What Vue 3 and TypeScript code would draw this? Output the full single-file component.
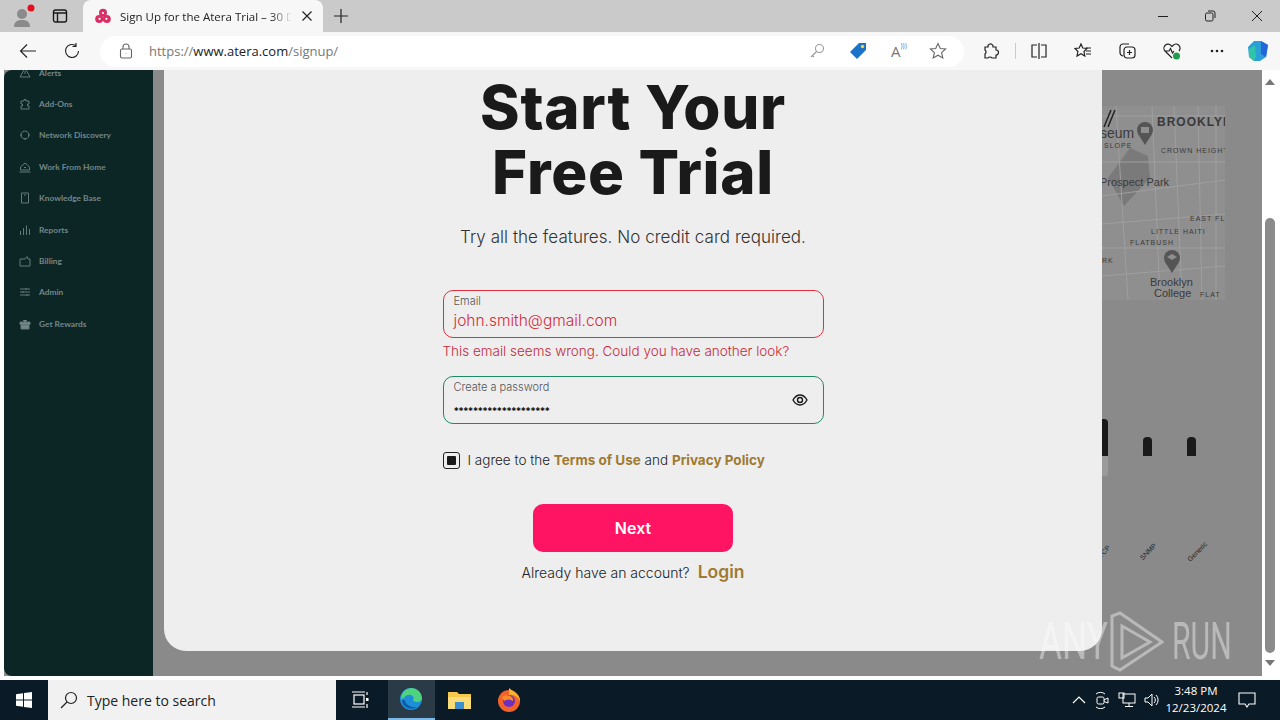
<script setup lang="ts">
interface NavItem {
  label: string
  path: string
  filled?: boolean
}

const navItems: NavItem[] = [
  { label: 'Alerts', path: 'M6 1 L11 10 H1 Z M6 4 V7' },
  { label: 'Add-Ons', path: 'M2 3 H5 V1.5 H7 V3 H10 V6 H8.5 V8 H10 V11 H2 V8 H3.5 V6 H2 Z' },
  { label: 'Network Discovery', path: 'M6 2 A4 4 0 1 1 5.9 2 M1 6 H3 M9 6 H11 M6 9 V11' },
  { label: 'Work From Home', path: 'M1.5 6 L6 2 L10.5 6 V9 H1.5 Z M0.5 11 H11.5 M5 6.5 H7' },
  { label: 'Knowledge Base', path: 'M2.5 1 H9.5 V11 H2.5 Z M5 3 H7' },
  { label: 'Reports', path: 'M1.5 11 V7 M4.5 11 V4 M7.5 11 V1.5 M10.5 11 V5' },
  { label: 'Billing', path: 'M1 4 H6 L8 1.5 L9 4 H11 V11 H1 Z M8.5 7.5 H8.6' },
  { label: 'Admin', path: 'M1 3 H11 M1 6 H11 M1 9 H11 M7 2 V4 M4 5 V7 M8 8 V10' },
  { label: 'Get Rewards', path: 'M1 4 H11 V6.5 H1 Z M2 7 H10 V11 H2 Z M4 2 L6 4 L8 2', filled: true },
]
</script>

<template>
  <div class="screen">
    <header class="tabstrip">
      <svg class="profile" width="24" height="26" viewBox="0 0 24 26">
        <circle cx="9" cy="11" r="5" fill="#8a8a8a" />
        <path d="M1 24 C1 18 5 17 9 17 C13 17 17 18 17 24 Z" fill="#8a8a8a" />
        <circle cx="18" cy="5" r="3.5" fill="#e3101f" />
      </svg>
      <svg class="tab-actions" width="16" height="16" viewBox="0 0 16 16" fill="none" stroke="#1a1a1a" stroke-width="1.4">
        <rect x="1.5" y="2" width="13" height="12" rx="2" />
        <path d="M1.5 5 H14.5 M5.5 5 V14" />
      </svg>
      <div class="tab">
        <svg width="16" height="16" viewBox="0 0 16 16">
          <g fill="#d92f66">
            <circle cx="8" cy="4.8" r="4" />
            <circle cx="4.2" cy="11" r="4" />
            <circle cx="11.8" cy="11" r="4" />
          </g>
          <g fill="#fff">
            <circle cx="8" cy="5" r="1.1" />
            <circle cx="4.6" cy="10.8" r="1.1" />
            <circle cx="11.4" cy="10.8" r="1.1" />
          </g>
        </svg>
        <span class="tab-title">Sign Up for the Atera Trial – 30 D</span>
        <svg width="12" height="12" viewBox="0 0 12 12" stroke="#222" stroke-width="1.2"><path d="M1.5 1.5 L10.5 10.5 M10.5 1.5 L1.5 10.5" /></svg>
      </div>
      <svg class="new-tab" width="16" height="16" viewBox="0 0 16 16" stroke="#222" stroke-width="1.2"><path d="M8 1 V15 M1 8 H15" /></svg>
      <div class="window-controls">
        <svg width="12" height="12" viewBox="0 0 12 12" stroke="#222"><path d="M1 6.5 H11" /></svg>
        <svg width="12" height="12" viewBox="0 0 12 12" stroke="#222" fill="none"><rect x="1.5" y="3" width="7.5" height="8" rx="1.5" /><path d="M4 1 H9 A2 2 0 0 1 11 3 V8" /></svg>
        <svg width="12" height="12" viewBox="0 0 12 12" stroke="#222"><path d="M1 1 L11 11 M11 1 L1 11" /></svg>
      </div>
    </header>

    <nav class="toolbar">
      <svg class="back" width="18" height="16" viewBox="0 0 18 16" fill="none" stroke="#222" stroke-width="1.1"><path d="M17 8 H1.5 M8 1.5 L1.5 8 L8 14.5" /></svg>
      <svg class="reload" width="18" height="18" viewBox="0 0 18 18" fill="none" stroke="#222" stroke-width="1.1"><path d="M15.5 9 A6.5 6.5 0 1 1 12.5 3.5 M13 1 V4.5 H9.5" /></svg>
      <div class="address">
        <svg width="14" height="16" viewBox="0 0 14 16" fill="none" stroke="#666" stroke-width="1.1"><rect x="1.5" y="6" width="11" height="9" rx="1.5" /><path d="M4 6 V4 A3 3 0 0 1 10 4 V6 M7 10 V10.6" /></svg>
        <span class="url"><i>https://</i>www.atera.com<i>/signup/</i></span>
        <div class="address-icons">
          <svg class="key" width="16" height="16" viewBox="0 0 16 16" fill="none" stroke="#999" stroke-width="1.1"><circle cx="10.5" cy="5.5" r="4" /><path d="M7.5 8.5 L2 14 M3.5 12.5 L5 14" /></svg>
          <svg width="18" height="18" viewBox="0 0 18 18"><path d="M10 1 H17 V8 L8 17 L1 10 Z" fill="#1a73c9" /><circle cx="13.5" cy="4.5" r="1.7" fill="#f5d33b" /></svg>
          <span class="read-aloud">A<small>)))</small></span>
          <svg width="18" height="18" viewBox="0 0 18 18" fill="none" stroke="#666" stroke-width="1.1"><path d="M9 1.5 L11.3 6.5 L16.6 7 L12.6 10.6 L13.8 16 L9 13.2 L4.2 16 L5.4 10.6 L1.4 7 L6.7 6.5 Z" /></svg>
        </div>
      </div>
      <div class="tool-icons">
        <svg width="18" height="18" viewBox="0 0 18 18" fill="none" stroke="#222" stroke-width="1.2"><path d="M3 5 H6 A2.5 2.5 0 0 1 11 4 L11 5 H14 V8 A2.5 2.5 0 0 1 14 13 V16 H10 A2.5 2.5 0 0 0 6 16 H3 V12 A2.5 2.5 0 0 0 3 8 Z" /></svg>
        <span class="tool-sep"></span>
        <svg width="18" height="18" viewBox="0 0 18 18" fill="none" stroke="#222" stroke-width="1.2"><path d="M7 3 H2 V15 H7 M11 3 H16 V15 H11 M9 1 V17" /></svg>
        <svg width="18" height="18" viewBox="0 0 18 18" fill="none" stroke="#222" stroke-width="1.2"><path d="M7 2 L8.8 6 L13 6.5 L10 9.5 L10.8 14 L7 11.8 L3 14 L3.9 9.5 L1 6.5 L5.2 6 Z M12 9 H17 M12 12 H17 M12 6 H17" /></svg>
        <svg width="18" height="18" viewBox="0 0 18 18" fill="none" stroke="#222" stroke-width="1.2"><rect x="6" y="5" width="11" height="11" rx="3" /><path d="M11.5 8 V13 M9 10.5 H14 M5 14 A4 4 0 0 1 2 10 V5 A3 3 0 0 1 5 2 H11" /></svg>
        <svg width="20" height="20" viewBox="0 0 20 20" fill="none"><path d="M10 17 L3 10 A4 4 0 0 1 9 4.5 L10 5.5 L11 4.5 A4 4 0 0 1 17 10 M3 10 H7 L8.5 7.5 L10.5 12 L12 10" stroke="#222" stroke-width="1.2" /><circle cx="14.5" cy="15" r="3.5" fill="#1f9d4d" /></svg>
        <svg width="18" height="18" viewBox="0 0 18 18" fill="#222"><circle cx="4" cy="9" r="1.3" /><circle cx="9" cy="9" r="1.3" /><circle cx="14" cy="9" r="1.3" /></svg>
        <svg class="copilot" width="24" height="24" viewBox="0 0 24 24">
          <path d="M8 2 H15 L22 6 L20 18 L14 22 L8 22 L3 18 L2 8 Z" fill="#2b9fd8" />
          <path d="M15 2 L22 6 L20 18 L15 15 Z" fill="#2566d8" />
          <path d="M3 10 L9 6 L10 18 L8 22 L3 18 Z" fill="#2fc5a8" />
        </svg>
      </div>
    </nav>

    <main class="viewport">
      <div class="page">
        <aside class="sidebar">
          <div v-for="item in navItems" :key="item.label" class="nav-item">
            <svg width="12" height="12" viewBox="0 0 12 12" :fill="item.filled ? '#72878a' : 'none'" stroke="#64797a" stroke-width="1"><path :d="item.path" /></svg>
            <span>{{ item.label }}</span>
          </div>
        </aside>

        <div class="content">
          <svg class="map" width="123" height="194" viewBox="0 0 123 194">
            <rect width="123" height="194" fill="#8f8f8f" />
            <path d="M6 72 L28 42 L46 50 L48 72 L22 100 Z" fill="#7a7a7a" />
            <g stroke="#9f9f9f" stroke-width="1" fill="none">
              <path d="M0 10 H123 M0 56 H123 M0 90 L123 74 M0 118 L123 108 M0 142 H123 M0 170 L123 160" />
              <path d="M14 0 L26 194 M50 0 L58 194 M72 0 L80 194 M96 0 L100 194 M114 0 V194" />
            </g>
            <path d="M2 21 L9 4 M6 21 L13 4" stroke="#222" stroke-width="1.5" />
            <text x="55" y="20" class="map-bold">BROOKLYN</text>
            <text x="-2" y="32" class="map-seum">seum</text>
            <text x="2" y="42" class="map-small">SLOPE</text>
            <text x="59" y="47" class="map-small">CROWN HEIGHT</text>
            <text x="-2" y="80" class="map-name">Prospect Park</text>
            <text x="88" y="115" class="map-small">EAST FL</text>
            <text x="49" y="128" class="map-small">LITTLE HAITI</text>
            <text x="28" y="139" class="map-small">FLATBUSH</text>
            <text x="0" y="157" class="map-small">RK</text>
            <text x="48" y="180" class="map-name">Brooklyn</text>
            <text x="52" y="191" class="map-name">College</text>
            <text x="98" y="191" class="map-small">FLAT</text>
            <g fill="#555">
              <circle cx="43" cy="24" r="8" />
              <path d="M36 28 L43 39 L50 28 Z" />
              <circle cx="70" cy="152" r="8" />
              <path d="M63 156 L70 167 L77 156 Z" />
            </g>
            <rect x="39" y="21" width="8" height="6" fill="#8f8f8f" />
            <path d="M65 151 L70 148 L75 151 L70 154 Z" fill="#8f8f8f" />
          </svg>
          <div class="chart">
            <i class="bar tall"></i>
            <i class="bar"></i>
            <i class="bar"></i>
          </div>
          <span class="chart-label one">TCP</span>
          <span class="chart-label two">SNMP</span>
          <span class="chart-label three">Generic</span>

          <section class="modal">
            <h1>Start Your<br />Free Trial</h1>
            <p class="lead">Try all the features. No credit card required.</p>

            <form class="form" @submit.prevent>
              <div class="field error">
                <label>Email</label>
                <div class="value">john.smith@gmail.com</div>
              </div>
              <div class="error-text">This email seems wrong. Could you have another look?</div>

              <div class="field valid">
                <label>Create a password</label>
                <div class="value dots">********************</div>
                <svg class="eye" width="16" height="12" viewBox="0 0 16 12" fill="none" stroke="#1a1a1a" stroke-width="1.4">
                  <path d="M1 6 C3 2.5 5.5 1 8 1 C10.5 1 13 2.5 15 6 C13 9.5 10.5 11 8 11 C5.5 11 3 9.5 1 6 Z" />
                  <circle cx="8" cy="6" r="2.5" />
                </svg>
              </div>

              <div class="agree">
                <span class="check"><i></i></span>
                <span>I agree to the <b>Terms of Use</b> and <b>Privacy Policy</b></span>
              </div>

              <button class="next" type="button">Next</button>
              <div class="login-row">
                <span>Already have an account?</span>
                <a href="#">Login</a>
              </div>
            </form>
          </section>
        </div>
      </div>

      <div class="scrollbar">
        <svg width="10" height="6" viewBox="0 0 10 6" fill="#777"><path d="M5 0 L10 6 H0 Z" /></svg>
        <div class="thumb"></div>
        <svg width="10" height="6" viewBox="0 0 10 6" fill="#777"><path d="M5 6 L0 0 H10 Z" /></svg>
      </div>

      <div class="watermark">
        <span class="any">ANY</span>
        <svg width="56" height="62" viewBox="0 0 56 62" fill="none" stroke="#fff" stroke-width="3">
          <path d="M4 6 V56 L12 60 L54 32 L12 3 Z" />
          <path d="M14 16 L42 32 L14 48 Z" />
        </svg>
        <span class="run">RUN</span>
      </div>
    </main>

    <footer class="taskbar">
      <svg class="start" width="16" height="16" viewBox="0 0 16 16" fill="#fff">
        <path d="M0 2.2 L7 1.2 V7.6 H0 Z M8 1 L16 0 V7.6 H8 Z M0 8.4 H7 V14.8 L0 13.8 Z M8 8.4 H16 V16 L8 15 Z" />
      </svg>
      <div class="search">
        <svg width="18" height="18" viewBox="0 0 18 18" fill="none" stroke="#222" stroke-width="1.2"><circle cx="11" cy="7" r="5.5" /><path d="M7 11 L1 17" /></svg>
        <span>Type here to search</span>
      </div>
      <svg class="task-view" width="18" height="18" viewBox="0 0 18 18" fill="none" stroke="#fff" stroke-width="1.2">
        <rect x="3" y="4" width="10" height="9" />
        <path d="M1 1 H14 M1 16 H14 M16 1 V4 M16 13 V17" />
        <rect x="15" y="7" width="2.5" height="3" fill="#fff" stroke="none" />
      </svg>
      <div class="app active">
        <svg width="24" height="24" viewBox="0 0 24 24">
          <circle cx="12" cy="12" r="11" fill="#1d8fd8" />
          <path d="M2 12 A10 10 0 0 1 23 11 C23 16 15 16 14 13 C17 8 8 5 5 11 Z" fill="#4fd37f" />
          <path d="M6 13 C6 18 13 21 18 20 C12 24 3 20 3 13 Z" fill="#0c5cab" />
        </svg>
      </div>
      <div class="app">
        <svg width="23" height="20" viewBox="0 0 23 20">
          <path d="M0 2 H9 L11 4 H23 V19 H0 Z" fill="#f6c94c" />
          <rect y="7" width="23" height="12" fill="#f9dc78" />
          <rect x="7" y="12" width="9" height="7" fill="#3a8fd0" />
        </svg>
      </div>
      <div class="app">
        <svg width="24" height="24" viewBox="0 0 24 24">
          <circle cx="12" cy="13" r="11" fill="#f2632b" />
          <path d="M12 0 C16 3 23 7 23 13 C20 8 16 6 12 7 Z" fill="#f8b32d" />
          <circle cx="12" cy="13" r="6" fill="#6d2fc0" />
          <path d="M5 9 C9 5 17 8 16 13 C13 11 10 11 7 13 Z" fill="#f98a2b" />
        </svg>
      </div>
      <div class="tray">
        <svg width="14" height="8" viewBox="0 0 14 8" fill="none" stroke="#fff" stroke-width="1.2"><path d="M1 7 L7 1 L13 7" /></svg>
        <svg width="16" height="18" viewBox="0 0 16 18" fill="none" stroke="#fff"><rect x="3" y="6" width="7" height="7" rx="1.5" /><path d="M10 9 L14 7 V12 L10 10.5 M2 3 A7 7 0 0 1 11 3 M2 16 A7 7 0 0 0 11 16" /></svg>
        <svg width="18" height="16" viewBox="0 0 18 16" fill="none" stroke="#fff"><rect x="5" y="2" width="12" height="9" /><rect x="1" y="1" width="5" height="5" /><path d="M11 11 V14 M7 14.5 H15" /></svg>
        <svg width="16" height="16" viewBox="0 0 16 16" fill="none" stroke="#fff"><path d="M1 6 H4 L8 2 V14 L4 10 H1 Z M10 5 A4 4 0 0 1 10 11 M12 3 A7 7 0 0 1 12 13" /></svg>
      </div>
      <div class="clock">
        <span>3:48 PM</span>
        <span>12/23/2024</span>
      </div>
      <svg class="notify" width="18" height="16" viewBox="0 0 18 16" fill="none" stroke="#fff" stroke-width="1.1"><path d="M1 1 H17 V12 H11 L9 15 L7 12 H1 Z" /></svg>
    </footer>
  </div>
</template>

<style>
html,
body {
  margin: 0;
  padding: 0;
  background: #fff;
}
</style>

<style scoped>
.screen {
  width: 1280px;
  height: 720px;
  overflow: hidden;
  display: flex;
  flex-direction: column;
  font-family: "Open Sans", "Liberation Sans", sans-serif;
}

/* browser chrome */
.tabstrip {
  height: 32px;
  flex: none;
  background: #cacaca;
  display: flex;
  align-items: center;
}

.profile {
  margin-left: 13px;
}

.tab-actions {
  margin-left: 15px;
}

.tab {
  margin-left: 15px;
  align-self: stretch;
  width: 240px;
  box-sizing: border-box;
  padding: 0 10px 0 12px;
  background: #f7f7f7;
  border-radius: 8px 8px 0 0;
  display: flex;
  align-items: center;
  gap: 9px;
}

.tab svg {
  flex: none;
}

.tab-title {
  flex: 1;
  min-width: 0;
  font-size: 11.5px;
  color: #222;
  white-space: nowrap;
  -webkit-mask-image: linear-gradient(to right, #000 88%, transparent);
  mask-image: linear-gradient(to right, #000 88%, transparent);
}

.new-tab {
  margin-left: 10px;
}

.window-controls {
  margin-left: auto;
  display: flex;
  gap: 35px;
  padding-right: 17px;
}

.toolbar {
  height: 38px;
  flex: none;
  background: #f7f7f7;
  display: flex;
  align-items: center;
}

.back {
  margin-left: 19px;
}

.reload {
  margin-left: 26px;
}

.address {
  margin-left: 19px;
  width: 864px;
  height: 31px;
  background: #fff;
  border-radius: 16px;
  display: flex;
  align-items: center;
  box-sizing: border-box;
  padding-left: 19px;
}

.url {
  margin-left: 16px;
  font-size: 13px;
  color: #222;
}

.url i {
  font-style: normal;
  color: #777;
}

.address-icons {
  margin-left: auto;
  padding-right: 17px;
  display: flex;
  align-items: center;
  gap: 22px;
}

.key {
  margin-right: 2px;
}

.read-aloud {
  font-size: 15px;
  color: #777;
  width: 18px;
  margin: 0 -2px 0 2px;
  white-space: nowrap;
}

.read-aloud small {
  font-size: 7px;
  vertical-align: top;
}

.tool-icons {
  margin-left: 18px;
  display: flex;
  align-items: center;
  gap: 26px;
}

.tool-sep {
  width: 1px;
  height: 16px;
  background: #ccc;
  margin: 0 -12px 0 -11px;
}

.copilot {
  margin-left: -6px;
}

/* page area */
.viewport {
  flex: 1;
  min-height: 0;
  position: relative;
  display: flex;
  padding-bottom: 4px;
  background: #fff;
}

.page {
  width: 1258px;
  margin-left: 4px;
  background: #8a8a8a;
  display: flex;
  overflow: hidden;
}

.sidebar {
  width: 149px;
  flex: none;
  background: #0c2626;
  border-radius: 8px 0 0 8px;
  overflow: hidden;
}

.nav-item {
  height: 31.4px;
  display: flex;
  align-items: center;
  gap: 8px;
  padding-left: 15px;
  font-size: 8.4px;
  font-weight: 700;
  color: #72878a;
  font-family: Lato, "Open Sans", sans-serif;
}

.nav-item:first-child {
  margin-top: -13px;
}

.content {
  flex: 1;
  position: relative;
  padding: 0 160px 25px 11px;
  display: flex;
}

.modal {
  position: relative;
  flex: 1;
  background: #eeeeee;
  border-radius: 0 0 22px 22px;
  display: flex;
  flex-direction: column;
  align-items: center;
  color: #1a1a1a;
}

h1 {
  margin: 5px 0 0;
  font-family: Inter, sans-serif;
  font-weight: 800;
  font-size: 60px;
  line-height: 65px;
  text-align: center;
  letter-spacing: 0.7px;
  color: #1a1a1a;
}

.lead {
  margin: 20px 0 0;
  font-family: Inter, sans-serif;
  font-weight: 300;
  font-size: 17px;
  letter-spacing: 0.05px;
  line-height: 24px;
  color: #333;
}

.form {
  width: 381px;
  margin-top: 41px;
  display: flex;
  flex-direction: column;
  font-family: Inter, sans-serif;
  font-weight: 300;
}

.field {
  position: relative;
  height: 48px;
  box-sizing: border-box;
  border: 1px solid;
  border-radius: 10px;
  padding: 4px 10px;
}

.field.error {
  border-color: #e0303e;
}

.field.valid {
  margin-top: 15px;
  border-color: #1f8a68;
}

.field label {
  display: block;
  font-size: 11px;
  line-height: 13px;
  color: #555;
}

.value {
  font-size: 15.5px;
  line-height: 22px;
  margin-top: 2px;
  color: #d52c3c;
}

.value.dots {
  font-size: 10px;
  color: #111;
  font-weight: 700;
  letter-spacing: -0.8px;
  margin-top: 6px;
}

.eye {
  position: absolute;
  right: 15px;
  top: 17px;
}

.error-text {
  margin-top: 3px;
  font-size: 13.5px;
  line-height: 20px;
  color: #c9283a;
}

.agree {
  margin-top: 27px;
  display: flex;
  align-items: center;
  gap: 8px;
  font-size: 13.5px;
  height: 18px;
  color: #222;
}

.agree b {
  font-weight: 700;
  color: #a07a32;
}

.check {
  width: 15px;
  height: 15px;
  border: 1.5px solid #222;
  border-radius: 3px;
  display: flex;
  align-items: center;
  justify-content: center;
}

.check i {
  width: 9px;
  height: 9px;
  background: #1a1a1a;
  border-radius: 1px;
}

.next {
  align-self: center;
  margin-top: 35px;
  width: 200px;
  height: 48px;
  border: none;
  border-radius: 10px;
  background: #ff1464;
  color: #fff;
  font-family: Inter, sans-serif;
  font-size: 16px;
  font-weight: 600;
}

.login-row {
  margin-top: 9px;
  display: flex;
  justify-content: center;
  align-items: baseline;
  gap: 8px;
  font-size: 14px;
  color: #222;
}

.login-row a {
  color: #a07a32;
  font-size: 17.5px;
  font-weight: 600;
  text-decoration: none;
}

/* dimmed dashboard behind the dialog */
.map {
  position: absolute;
  left: 949px;
  top: 36px;
}

.map text {
  fill: #3a3a3a;
  font-family: "Liberation Sans", sans-serif;
}

.map-bold {
  font-size: 12px;
  font-weight: 700;
  letter-spacing: 1px;
}

.map-name {
  font-size: 11px;
}

.map-seum {
  font-size: 14px;
}

.map-small {
  font-size: 7px;
  letter-spacing: 1px;
}

.chart {
  position: absolute;
  left: 946px;
  top: 349px;
  width: 100px;
  height: 37px;
  display: flex;
  align-items: flex-end;
  gap: 35px;
}

.bar {
  position: relative;
  width: 9px;
  height: 19px;
  background: #1a1a1a;
  border-radius: 4px 4px 0 0;
}

.bar.tall {
  height: 37px;
}

.bar.tall::after {
  content: "";
  position: absolute;
  left: 0;
  top: 100%;
  width: 9px;
  height: 20px;
  background: #9a9a9a;
  border-radius: 0 0 3px 3px;
}

.chart-label {
  position: absolute;
  top: 478px;
  font-size: 7px;
  color: #222;
  transform: rotate(-45deg);
  font-family: "Liberation Sans", sans-serif;
}

.chart-label.one { left: 944px; }
.chart-label.two { left: 985px; }
.chart-label.three { left: 1032px; }

.scrollbar {
  position: absolute;
  right: 2px;
  top: 0;
  bottom: 4px;
  width: 16px;
  display: flex;
  flex-direction: column;
  align-items: center;
  padding-top: 9px;
  box-sizing: border-box;
}

.thumb {
  width: 10px;
  height: 435px;
  margin-top: 133px;
  margin-bottom: 7px;
  border-radius: 5px;
  background: #8b8b8b;
}

.watermark {
  position: absolute;
  left: 1039px;
  top: 540px;
  display: flex;
  align-items: center;
  opacity: 0.4;
  color: #fff;
  font-family: Roboto, sans-serif;
  font-weight: 400;
  font-size: 52px;
}

.watermark span {
  display: inline-block;
  width: 64px;
  transform-origin: left center;
  white-space: nowrap;
}

.watermark .any {
  transform: scaleX(0.68);
}

.watermark .run {
  transform: scaleX(0.58);
}

.watermark svg {
  margin: 0 8px 0 5px;
}

/* windows taskbar */
.taskbar {
  height: 40px;
  flex: none;
  background: #0a1a26;
  display: flex;
  align-items: center;
  color: #fff;
}

.start {
  margin-left: 16px;
}

.search {
  margin-left: 16px;
  width: 288px;
  height: 40px;
  box-sizing: border-box;
  background: #f1f1f1;
  padding-left: 12px;
  display: flex;
  align-items: center;
  gap: 9px;
  color: #222;
  font-size: 14px;
}

.task-view {
  margin-left: 15px;
}

.app {
  width: 47px;
  height: 40px;
  display: flex;
  align-items: center;
  justify-content: center;
  box-sizing: border-box;
}

.app.active {
  margin-left: 19px;
  padding-right: 2px;
  background: #2a3a46;
  border-bottom: 2px solid #7ab8e8;
}

.app + .app {
  margin-left: 1px;
}

.app + .app + .app {
  margin-left: 2px;
}

.tray {
  margin-left: auto;
  display: flex;
  align-items: center;
  gap: 8px;
}

.clock {
  width: 72px;
  margin-top: -2px;
  display: flex;
  flex-direction: column;
  align-items: center;
  font-size: 11.5px;
  line-height: 17px;
}

.notify {
  margin-left: 6px;
  margin-right: 24px;
}
</style>
